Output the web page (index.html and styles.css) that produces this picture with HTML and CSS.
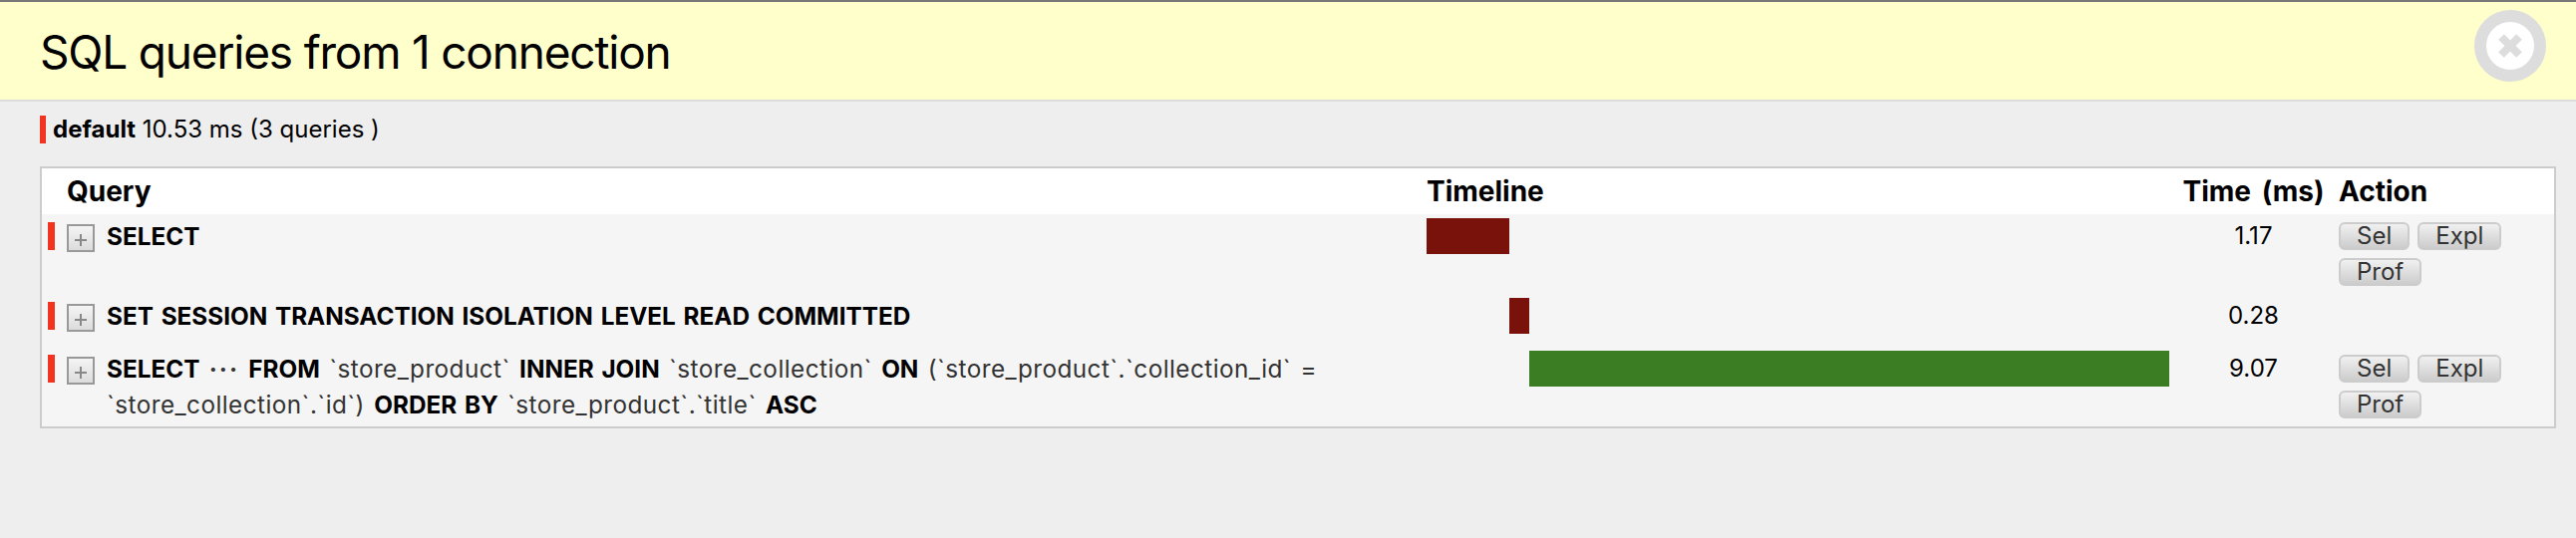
FILE: index.html
```html
<!DOCTYPE html>
<html>
<head>
  <meta charset="UTF-8">
  <title>SQL queries</title>
  <link rel="stylesheet" href="styles.css">
</head>
<body>
  <div class="header">
    <h1>SQL queries from 1 connection</h1>
    <a class="close" href="#">
      <svg width="72" height="72" viewBox="0 0 72 72">
        <circle cx="36" cy="36" r="30" fill="#fff" stroke="#ddd" stroke-width="12"/>
        <path d="M27 27 L45 45 M45 27 L27 45" stroke="#ddd" stroke-width="8" fill="none"/>
      </svg>
    </a>
  </div>

  <div class="content">
    <p class="connection"><span class="tick conn-tick"></span><span><strong>default</strong> 10.53 ms (3 queries )</span></p>

    <table class="queries">
      <colgroup>
        <col class="col-query">
        <col class="col-timeline">
        <col class="col-time">
        <col class="col-action">
      </colgroup>
      <thead>
        <tr>
          <th class="query-head">Query</th>
          <th>Timeline</th>
          <th class="time">Time (ms)</th>
          <th class="action-head">Action</th>
        </tr>
      </thead>
      <tbody>
        <tr>
          <td>
            <div class="query">
              <span class="tick"></span>
              <span class="toggle"><svg width="12" height="12" viewBox="0 0 12 12"><path d="M6 0 V12 M0 6 H12" stroke="#888" stroke-width="2"/></svg></span>
              <div class="sql"><strong>SELECT</strong></div>
            </div>
          </td>
          <td class="timeline"><div class="bar slow" style="margin-left: 0; width: 11.14%"></div></td>
          <td class="time">1.17</td>
          <td class="action">
            <div class="buttons">
              <button>Sel</button>
              <button>Expl</button>
              <button>Prof</button>
            </div>
          </td>
        </tr>
        <tr>
          <td>
            <div class="query">
              <span class="tick"></span>
              <span class="toggle"><svg width="12" height="12" viewBox="0 0 12 12"><path d="M6 0 V12 M0 6 H12" stroke="#888" stroke-width="2"/></svg></span>
              <div class="sql"><strong>SET SESSION TRANSACTION ISOLATION LEVEL READ COMMITTED</strong></div>
            </div>
          </td>
          <td class="timeline"><div class="bar slow" style="margin-left: 11.14%; width: 2.68%"></div></td>
          <td class="time">0.28</td>
          <td class="action"></td>
        </tr>
        <tr>
          <td>
            <div class="query">
              <span class="tick"></span>
              <span class="toggle"><svg width="12" height="12" viewBox="0 0 12 12"><path d="M6 0 V12 M0 6 H12" stroke="#888" stroke-width="2"/></svg></span>
              <div class="sql"><strong>SELECT</strong> <span class="dots">···</span> <strong>FROM</strong> `store_product` <strong>INNER JOIN</strong> `store_collection` <strong>ON</strong> (`store_product`.`collection_id` =<br>`store_collection`.`id`) <strong>ORDER BY</strong> `store_product`.`title` <strong>ASC</strong></div>
            </div>
          </td>
          <td class="timeline"><div class="bar fast" style="margin-left: 13.82%; width: 86.18%"></div></td>
          <td class="time">9.07</td>
          <td class="action">
            <div class="buttons">
              <button>Sel</button>
              <button>Expl</button>
              <button>Prof</button>
            </div>
          </td>
        </tr>
      </tbody>
    </table>
  </div>
</body>
</html>
```

FILE: styles.css
```css
* {
  box-sizing: border-box;
}

body {
  margin: 0;
  height: 540px;
  overflow: hidden;
  background-color: #eee;
  color: #000;
  font-family: Inter, "Liberation Sans", sans-serif;
  font-size: 24px;
}

.header {
  position: relative;
  height: 102px;
  padding: 0 0 0 40px;
  background-color: #ffc;
  border-top: 2px solid #777;
  border-bottom: 2px solid #ddd;
}

.header h1 {
  margin: 0;
  font-size: 46px;
  font-weight: 400;
  letter-spacing: -1.2px;
  line-height: 100px;
}

.close {
  position: absolute;
  top: 8px;
  right: 30px;
  display: block;
  height: 72px;
}

.content {
  padding: 14px 20px 0 40px;
}

.connection {
  display: flex;
  align-items: center;
  gap: 7px;
  margin: 0 0 23px;
  line-height: 28px;
}

.tick {
  flex: none;
  width: 7px;
  height: 28px;
  margin-top: 4px;
  background-color: #f33322;
}

.conn-tick {
  width: 6px;
  margin-top: 0;
}

.queries {
  width: 100%;
  table-layout: fixed;
  border-collapse: separate;
  border-spacing: 0;
  border: 2px solid #ccc;
  background-color: #f5f5f5;
}

.col-query {
  width: 1389px;
}

.col-timeline {
  width: 749px;
}

.col-time {
  width: 161px;
}

.queries th {
  height: 46px;
  padding: 0;
  background-color: #fff;
  font-size: 28px;
  font-weight: 700;
  word-spacing: 4px;
  text-align: left;
}

.queries th.query-head {
  padding-left: 25px;
}

.queries th.time {
  text-align: center;
}

.queries th.action-head {
  padding-left: 5px;
}

.queries td {
  padding: 4px 0;
  vertical-align: top;
  line-height: 36px;
}

.query {
  display: flex;
  padding-left: 6px;
}

.toggle {
  flex: none;
  display: flex;
  align-items: center;
  justify-content: center;
  width: 28px;
  height: 28px;
  margin: 6px 12px 0;
  padding-top: 4px;
  border: 2px solid #999;
  background: linear-gradient(#f4f4f4, #dcdcdc);
}

.sql {
  color: #333;
  font-size: 24.3px;
  letter-spacing: 0.45px;
  word-spacing: 2px;
}

.sql strong {
  color: #000;
  letter-spacing: 0;
}

.dots {
  letter-spacing: 2px;
  font-weight: 700;
}

.queries td.timeline {
  padding-right: 4px;
}

.bar {
  height: 36px;
  margin-bottom: 9px;
}

.slow {
  background-color: #7a120c;
}

.fast {
  background-color: #3a7d22;
}

.queries td.time {
  text-align: center;
}

.queries td.action {
  padding: 8px 0 8px 5px;
}

.buttons {
  display: flex;
  flex-wrap: wrap;
  gap: 8px;
}

button {
  height: 28px;
  padding: 0 16px;
  border: 2px solid #ccc;
  border-radius: 6px;
  background: linear-gradient(#f0f0f0, #ccc);
  color: #333;
  font-family: inherit;
  font-size: 24px;
  line-height: 22px;
}
```
